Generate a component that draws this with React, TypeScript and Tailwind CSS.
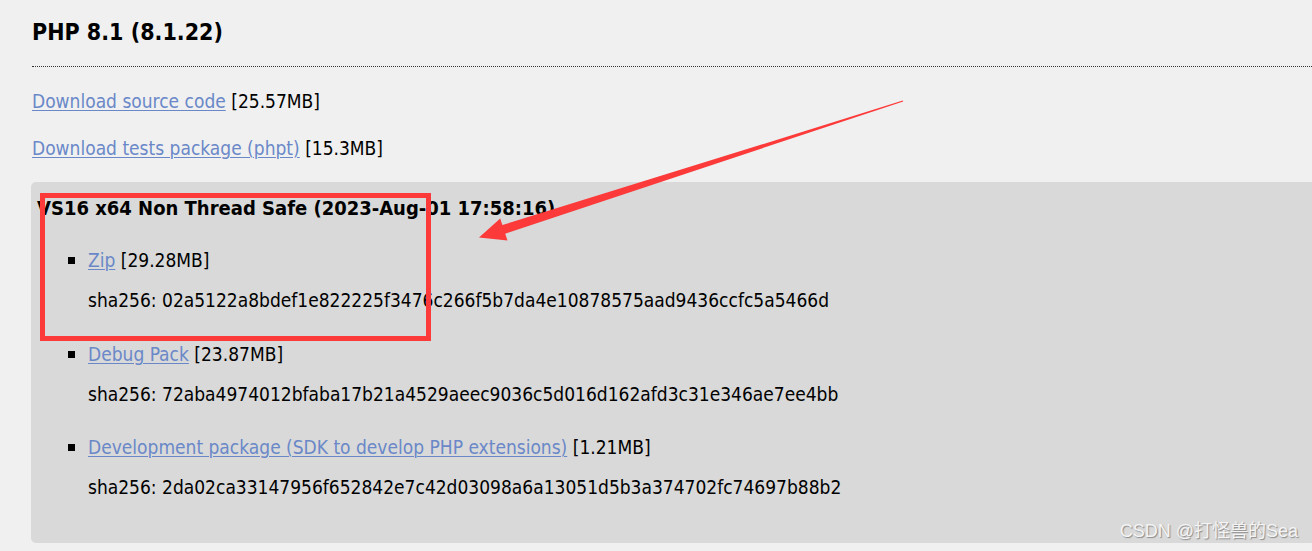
const body = { fontFamily: "'DejaVu Sans Condensed', 'DejaVu Sans', sans-serif" };

const builds = [
  {
    name: 'Zip',
    size: '29.28MB',
    sha: '02a5122a8bdef1e822225f3476c266f5b7da4e10878575aad9436ccfc5a5466d',
    mt: 'mt-[28px]',
  },
  {
    name: 'Debug Pack',
    size: '23.87MB',
    sha: '72aba4974012bfaba17b21a4529aeec9036c5d016d162afd3c31e346ae7ee4bb',
    mt: 'mt-[30px]',
  },
  {
    name: 'Development package (SDK to develop PHP extensions)',
    size: '1.21MB',
    sha: '2da02ca33147956f652842e7c42d03098a6a13051d5b3a374702fc74697b88b2',
    mt: 'mt-[29px]',
  },
];

function Link({ children }: { children: React.ReactNode }) {
  return <a className="text-[#6a88c8] underline underline-offset-2 decoration-1 cursor-pointer">{children}</a>;
}

export default function App() {
  return (
    <div className="relative w-[1312px] h-[551px] overflow-hidden bg-[#f0f0f0] pl-[32px] text-black font-stretch-condensed" style={body}>
      <div className="h-[67px] pt-[18px] border-b border-dotted border-[#333]">
        <h2 className="text-[23px] leading-[28px] font-bold">PHP 8.1 (8.1.22)</h2>
      </div>

      <p className="mt-[22px] text-[19px] leading-[24px]">
        <Link>Download source code</Link> [25.57MB]
      </p>
      <p className="mt-[23px] text-[19px] leading-[24px]">
        <Link>Download tests package (phpt)</Link> [15.3MB]
      </p>

      <div className="mt-[22px] -ml-px h-[361px] bg-[#d9d9d9] rounded-l-[5px] pl-[6px] pt-[14px]">
        <h3 className="text-[20px] leading-[24px] font-bold">VS16 x64 Non Thread Safe (2023-Aug-01 17:58:16)</h3>
        <ul className="pl-[31px]">
          {builds.map((b) => (
            <li key={b.name} className={b.mt}>
              <div className="flex items-center text-[19px] leading-[24px]">
                <span className="w-[7px] h-[7px] bg-black mr-[13px] shrink-0" />
                <span>
                  <Link>{b.name}</Link> [{b.size}]
                </span>
              </div>
              <p className="mt-[16px] pl-[20px] text-[19px] leading-[24px]">sha256: {b.sha}</p>
            </li>
          ))}
        </ul>
      </div>

      {/* annotation overlay */}
      <div className="absolute left-[40px] top-[193px] w-[391px] h-[148px] border-[5px] border-[#fc3a3a]" />
      <svg className="absolute left-0 top-0 pointer-events-none" width="1312" height="551">
        <polygon
          fill="#fc3a3a"
          points="903.2,101.4 505.2,233.7 507.5,240.5 479,237.5 500.2,218.5 502.4,225.1 902.8,100.6"
        />
      </svg>

      <div
        className="absolute right-[14px] bottom-[10px] text-[18px] leading-[20px] text-[#f4f4f4] [text-shadow:1px_1px_1px_#8a8a8a]"
        style={{ fontFamily: "'Liberation Sans', 'Noto Sans CJK SC', sans-serif" }}
      >
        CSDN @打怪兽的Sea
      </div>
    </div>
  );
}
